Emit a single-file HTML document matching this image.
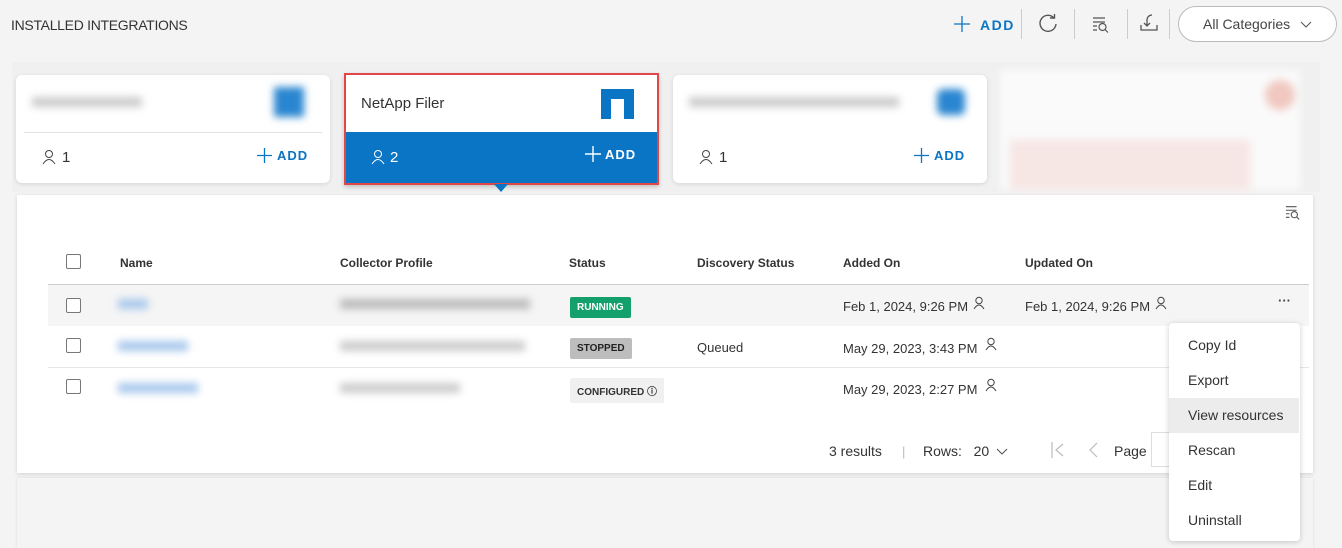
<!DOCTYPE html>
<html><head><style>
*{box-sizing:border-box;margin:0;padding:0}
body{width:1342px;height:544px;background:#f4f4f4;font-family:"Liberation Sans",sans-serif;color:#333;position:relative;overflow:hidden}
.a{position:absolute}
.card{position:absolute;background:#fff;border-radius:6px;box-shadow:0 1px 4px rgba(0,0,0,.12)}
.blur{filter:blur(4px)}
.blue{color:#0a74c5}
.hd{font-size:12px;font-weight:bold;color:#333}
.cb{position:absolute;width:15px;height:15px;border:1.5px solid #777;border-radius:2px;background:#fff}
.td{font-size:13px;color:#333}
.badge{position:absolute;font-size:10px;font-weight:bold;padding:5px 7px;border-radius:2px}
.mi{position:absolute;left:0;width:130px;height:35px;line-height:35px;padding-left:19px;font-size:14px;color:#333}
.vs{position:absolute;width:1px;height:30px;background:#ccc;top:9px}
</style></head><body>
<div class="a" style="left:11px;top:17px;font-size:14px;color:#333;letter-spacing:-0.3px">INSTALLED INTEGRATIONS</div>
<svg class="a" style="left:954px;top:16px" width="16" height="16"><path d="M8 0V16M0 8H16" stroke="#0a74c5" stroke-width="1.3"/></svg>
<div class="a blue" style="left:980px;top:17px;font-size:14px;font-weight:bold;letter-spacing:1.5px">ADD</div>
<div class="vs" style="left:1021px"></div>
<svg class="a" style="left:1037px;top:13px" width="22" height="22" viewBox="0 0 22 22"><path d="M17 5 A8 8 0 1 0 19 11" fill="none" stroke="#555" stroke-width="1.4"/><path d="M13 5 H17.5 V1" fill="none" stroke="#555" stroke-width="1.4"/></svg>
<div class="vs" style="left:1074px"></div>
<svg class="a" style="left:1091px;top:15px" width="20" height="18" viewBox="0 0 20 18"><path d="M2 3H14M2 7H14M2 11H6M2 15H6" stroke="#555" stroke-width="1.2"/><circle cx="11.5" cy="12" r="3.5" fill="none" stroke="#555" stroke-width="1.2"/><path d="M14 14.5L17 17.5" stroke="#555" stroke-width="1.2"/></svg>
<div class="vs" style="left:1127px"></div>
<svg class="a" style="left:1138px;top:12px" width="22" height="22" viewBox="0 0 22 22"><path d="M3 13V18H19V13" fill="none" stroke="#555" stroke-width="1.3"/><path d="M14 3 A5 5 0 0 0 9 8 V14 M6 11 L9 14 L12 11" fill="none" stroke="#555" stroke-width="1.3"/></svg>
<div class="vs" style="left:1169px"></div>
<div class="a" style="left:1178px;top:6px;width:159px;height:36px;border:1px solid #bbb;border-radius:18px;background:#fff;font-size:14px;color:#444;line-height:34px;padding-left:24px">All Categories <svg width="12" height="8" style="margin-left:6px"><path d="M1 1L6 6L11 1" fill="none" stroke="#555" stroke-width="1.1"/></svg></div>

<div class="a" style="left:12px;top:62px;width:1308px;height:130px;background:#f0f0f0"></div>
<div class="card" style="left:16px;top:75px;width:314px;height:108px">
 <div class="a blur" style="left:16px;top:22px;width:110px;height:10px;background:#999;opacity:.5"></div>
 <div class="a blur" style="left:258px;top:12px;width:30px;height:30px;background:#2a86d0"></div>
 <div class="a" style="left:8px;top:57px;width:298px;height:1px;background:#e2e2e2"></div>
 <svg class="a" style="left:26px;top:74px" width="14" height="16"><circle cx="7" cy="5" r="3.5" fill="none" stroke="#444"/><path d="M1 15 Q7 6 13 15" fill="none" stroke="#444"/></svg>
 <div class="a" style="left:46px;top:74px;font-size:15px">1</div>
 <svg class="a" style="left:241px;top:73px" width="15" height="15"><path d="M7.5 0V15M0 7.5H15" stroke="#0a74c5" stroke-width="1.3"/></svg>
 <div class="a blue" style="left:261px;top:73px;font-size:13px;font-weight:bold;letter-spacing:1px">ADD</div>
</div>
<div class="a" style="left:344px;top:73px;width:315px;height:112px;border:2px solid #e04848;background:#fff;box-shadow:0 2px 4px rgba(0,0,0,.2)">
 <div class="a" style="left:15px;top:20px;font-size:15px;color:#333">NetApp Filer</div>
 <svg class="a" style="left:255px;top:14px" width="33" height="30"><path d="M0 0H33V30H23V10H10V30H0Z" fill="#0a74c5"/></svg>
 <div class="a" style="left:0;top:57px;width:311px;height:51px;background:#0a74c5">
  <svg class="a" style="left:25px;top:17px" width="14" height="16"><circle cx="7" cy="5" r="3.5" fill="none" stroke="#fff"/><path d="M1 15 Q7 6 13 15" fill="none" stroke="#fff"/></svg>
  <div class="a" style="left:44px;top:17px;font-size:15px;color:#fff">2</div>
  <svg class="a" style="left:239px;top:14px" width="16" height="16"><path d="M8 0V16M0 8H16" stroke="#fff" stroke-width="1.4"/></svg>
  <div class="a" style="left:259px;top:15px;font-size:13px;color:#fff;font-weight:bold;letter-spacing:1px">ADD</div>
 </div>
</div>
<div class="a" style="left:494px;top:184px;width:0;height:0;border-left:7px solid transparent;border-right:7px solid transparent;border-top:8px solid #0a74c5"></div>
<div class="card" style="left:673px;top:75px;width:314px;height:108px">
 <div class="a blur" style="left:16px;top:22px;width:210px;height:10px;background:#999;opacity:.5"></div>
 <div class="a blur" style="left:264px;top:14px;width:28px;height:26px;background:#2a86d0;border-radius:6px"></div>
 <svg class="a" style="left:26px;top:74px" width="14" height="16"><circle cx="7" cy="5" r="3.5" fill="none" stroke="#444"/><path d="M1 15 Q7 6 13 15" fill="none" stroke="#444"/></svg>
 <div class="a" style="left:46px;top:74px;font-size:15px">1</div>
 <svg class="a" style="left:241px;top:73px" width="15" height="15"><path d="M7.5 0V15M0 7.5H15" stroke="#0a74c5" stroke-width="1.3"/></svg>
 <div class="a blue" style="left:261px;top:73px;font-size:13px;font-weight:bold;letter-spacing:1px">ADD</div>
</div>
<div class="a blur" style="left:1000px;top:70px;width:300px;height:120px;background:#fafafa"></div>
<div class="a blur" style="left:1010px;top:140px;width:240px;height:50px;background:#f6e6e4"></div>
<div class="a blur" style="left:1265px;top:80px;width:30px;height:30px;background:#f0c8c0;border-radius:50%"></div>

<div class="a" style="left:17px;top:195px;width:1296px;height:278px;background:#fff;box-shadow:0 1px 4px rgba(0,0,0,.15)"></div>
<div class="a" style="left:17px;top:478px;width:1296px;height:70px;background:#f4f4f4;box-shadow:0 0 3px rgba(0,0,0,.1)"></div>
<svg class="a" style="left:1284px;top:204px" width="18" height="16" viewBox="0 0 20 18"><path d="M2 3H14M2 7H14M2 11H6M2 15H6" stroke="#555" stroke-width="1.2"/><circle cx="11.5" cy="12" r="3.5" fill="none" stroke="#555" stroke-width="1.2"/><path d="M14 14.5L17 17.5" stroke="#555" stroke-width="1.2"/></svg>
<div class="cb" style="left:66px;top:254px"></div>
<div class="a hd" style="left:120px;top:256px">Name</div>
<div class="a hd" style="left:340px;top:256px">Collector Profile</div>
<div class="a hd" style="left:569px;top:256px">Status</div>
<div class="a hd" style="left:697px;top:256px">Discovery Status</div>
<div class="a hd" style="left:843px;top:256px">Added On</div>
<div class="a hd" style="left:1025px;top:256px">Updated On</div>
<div class="a" style="left:48px;top:284px;width:1261px;height:1px;background:#ccc"></div>
<div class="a" style="left:48px;top:285px;width:1261px;height:41px;background:#f5f5f5"></div>
<div class="a" style="left:48px;top:367px;width:1261px;height:1px;background:#e6e6e6"></div>
<div class="cb" style="left:66px;top:298px"></div>
<div class="cb" style="left:66px;top:338px"></div>
<div class="cb" style="left:66px;top:379px"></div>
<div class="a blur" style="left:118px;top:299px;width:30px;height:10px;background:#a8c8ec"></div>
<div class="a blur" style="left:118px;top:341px;width:70px;height:10px;background:#a8c8ec"></div>
<div class="a blur" style="left:118px;top:383px;width:80px;height:10px;background:#a8c8ec"></div>
<div class="a blur" style="left:340px;top:299px;width:190px;height:10px;background:#bbb"></div>
<div class="a blur" style="left:340px;top:341px;width:185px;height:10px;background:#ccc"></div>
<div class="a blur" style="left:340px;top:383px;width:120px;height:10px;background:#ccc"></div>
<div class="badge" style="left:570px;top:297px;background:#14a06c;color:#fff">RUNNING</div>
<div class="badge" style="left:570px;top:338px;background:#bdbdbd;color:#222">STOPPED</div>
<div class="badge" style="left:570px;top:378px;background:#f0f0f0;color:#333">CONFIGURED &#9432;</div>
<div class="a td" style="left:697px;top:340px">Queued</div>
<div class="a td" style="left:843px;top:299px">Feb 1, 2024, 9:26 PM</div>
<div class="a td" style="left:1025px;top:299px">Feb 1, 2024, 9:26 PM</div>
<div class="a td" style="left:843px;top:341px">May 29, 2023, 3:43 PM</div>
<div class="a td" style="left:843px;top:382px">May 29, 2023, 2:27 PM</div>
<svg class="a" style="left:973px;top:296px" width="12" height="14"><circle cx="6" cy="4.5" r="3.2" fill="none" stroke="#444"/><path d="M1 13 Q6 5 11 13" fill="none" stroke="#444"/></svg>
<svg class="a" style="left:1155px;top:296px" width="12" height="14"><circle cx="6" cy="4.5" r="3.2" fill="none" stroke="#444"/><path d="M1 13 Q6 5 11 13" fill="none" stroke="#444"/></svg>
<svg class="a" style="left:985px;top:337px" width="12" height="14"><circle cx="6" cy="4.5" r="3.2" fill="none" stroke="#444"/><path d="M1 13 Q6 5 11 13" fill="none" stroke="#444"/></svg>
<svg class="a" style="left:985px;top:378px" width="12" height="14"><circle cx="6" cy="4.5" r="3.2" fill="none" stroke="#444"/><path d="M1 13 Q6 5 11 13" fill="none" stroke="#444"/></svg>
<div class="a" style="left:1278px;top:293px;font-size:13px;font-weight:bold;color:#444">···</div>
<div class="a td" style="left:829px;top:443px;font-size:14px">3 results</div>
<div class="a" style="left:902px;top:444px;font-size:13px;color:#bbb">|</div>
<div class="a td" style="left:923px;top:443px;font-size:14px">Rows:&nbsp;&nbsp; 20 <svg width="12" height="8" style="margin-left:3px"><path d="M1 1L6 6L11 1" fill="none" stroke="#555" stroke-width="1.1"/></svg></div>
<svg class="a" style="left:1051px;top:442px" width="14" height="16"><path d="M1 0V16M12 2L5 8L12 14" fill="none" stroke="#bbb" stroke-width="1.2"/></svg>
<svg class="a" style="left:1087px;top:442px" width="12" height="16"><path d="M10 1L3 8L10 15" fill="none" stroke="#bbb" stroke-width="1.2"/></svg>
<div class="a td" style="left:1114px;top:443px;font-size:14px">Page</div>
<div class="a" style="left:1151px;top:432px;width:25px;height:35px;border:1px solid #ddd;background:#fff"></div>
<div class="a" style="left:1169px;top:323px;width:131px;height:218px;background:#fff;border-radius:4px;box-shadow:0 1px 6px rgba(0,0,0,.2)">
 <div class="mi" style="top:5px">Copy Id</div>
 <div class="mi" style="top:40px">Export</div>
 <div class="mi" style="top:75px;background:#ececec">View resources</div>
 <div class="mi" style="top:110px">Rescan</div>
 <div class="mi" style="top:145px">Edit</div>
 <div class="mi" style="top:180px">Uninstall</div>
</div>
</body></html>
